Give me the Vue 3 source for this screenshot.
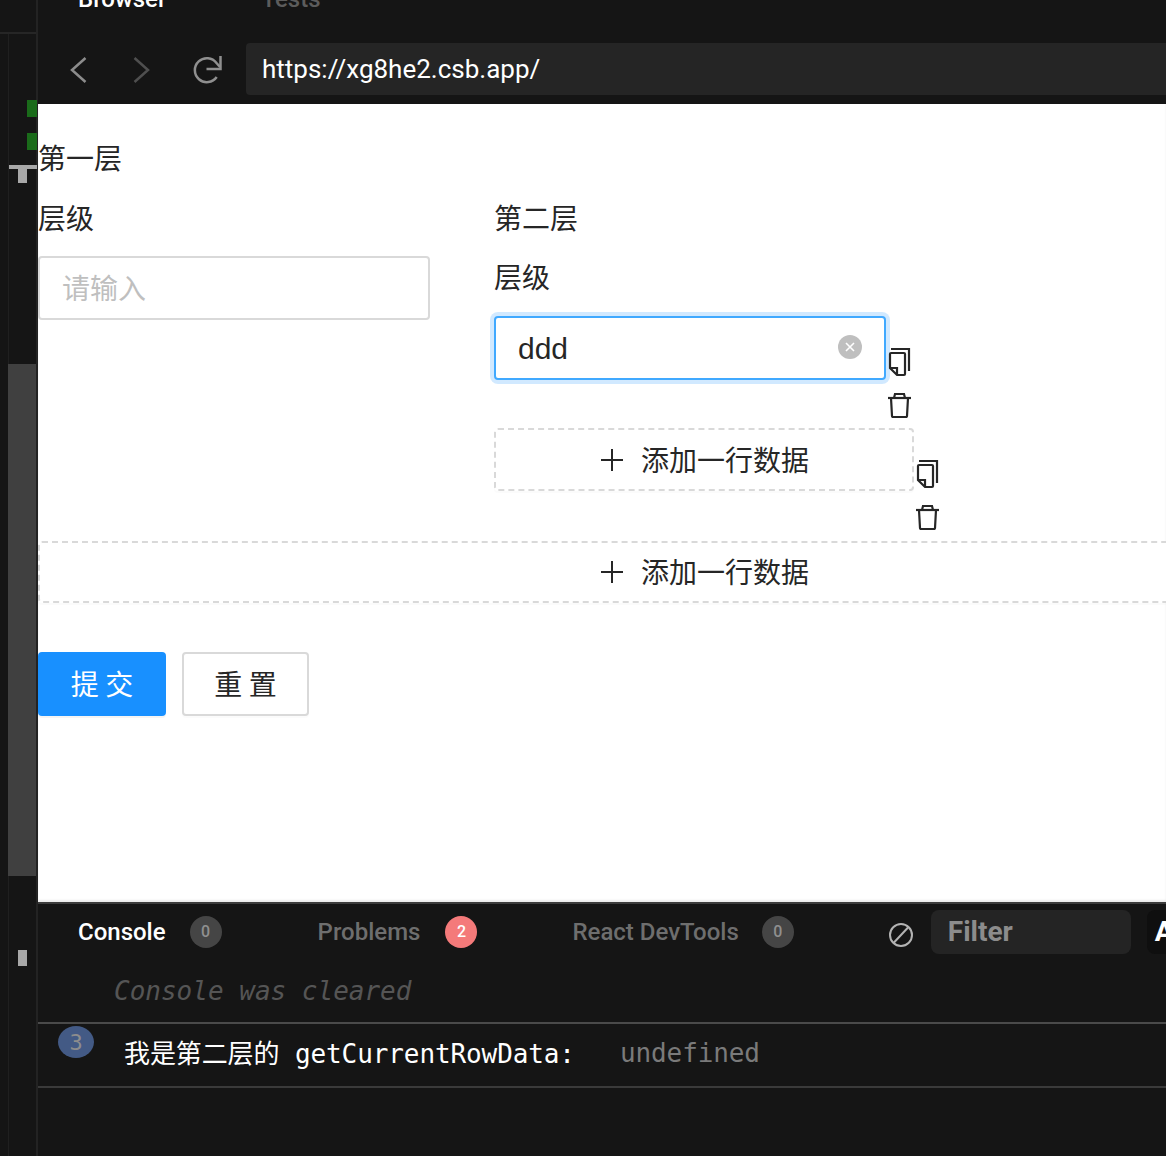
<script setup>
const tabs = [
  { name: 'Console', count: 0, active: true },
  { name: 'Problems', count: 2, alert: true },
  { name: 'React DevTools', count: 0 }
]
</script>

<template>
  <div class="root">
    <aside class="rail">
      <div class="rail-inner">
        <div class="rail-head"></div>
        <div class="rail-thumb"></div>
        <i class="mark green g1"></i>
        <i class="mark green g2"></i>
        <i class="mark t-bar"></i>
        <i class="mark t-stem"></i>
        <i class="mark dot"></i>
      </div>
    </aside>

    <main class="main">
      <header class="top">
        <nav class="top-tabs">
          <span class="top-tab on">Browser</span>
          <span class="top-tab">Tests</span>
        </nav>
        <div class="addr-row">
          <svg class="nav back" width="18" height="28" viewBox="0 0 18 28"><path d="M15.500 2 L2 14 L15.500 26" /></svg>
          <svg class="nav fwd" width="18" height="28" viewBox="0 0 18 28"><path d="M2.500 2 L16 14 L2.500 26" /></svg>
          <svg class="nav reload" width="30" height="30" viewBox="0 0 30 30"><path d="M24.700 22 A12 12 0 1 1 24.500 8 L28 12" /><path d="M28.500 1 V14 H14.500" /></svg>
          <div class="addr">https://xg8he2.csb.app/</div>
        </div>
      </header>

      <section class="preview">
        <div class="form">
          <div class="label">第一层</div>
          <div class="layers">
            <div class="col-one">
              <div class="label">层级</div>
              <input class="field" placeholder="请输入" />
            </div>
            <div class="col-two">
              <div class="label">第二层</div>
              <div class="label">层级</div>
              <div class="inner-row">
                <div class="field focused">
                  <span>ddd</span>
                  <span class="clear">
                    <svg width="10" height="10" viewBox="0 0 10 10"><path d="M1 1 L9 9 M9 1 L1 9" /></svg>
                  </span>
                </div>
                <div class="tools first-tools">
                  <svg class="ic copy" width="23" height="29" viewBox="0 0 23 29"><path d="M3 1 H21 V23" /><path d="M2 20 V6 Q2 5 3 5 H16 Q17 5 17 6 V26 Q17 27 16 27 H9 L2 20 Z" /><path d="M2 20 H9 V27" /></svg>
                  <svg class="ic trash" width="25" height="26" viewBox="0 0 25 26"><path d="M1 6 H24" /><path d="M7 6 L8 2 H17 L18 6" /><path d="M4 6 L5 24 Q5 25 6 25 H19 Q20 25 20 24 L21 6" /></svg>
                </div>
              </div>
              <button class="add narrow" type="button">
                <svg width="22" height="22" viewBox="0 0 22 22"><path d="M11 0 V22 M0 11 H22" /></svg>
                <span class="add-text">添加一行数据</span>
              </button>
            </div>
            <div class="tools outer-tools">
              <svg class="ic copy" width="23" height="29" viewBox="0 0 23 29"><path d="M3 1 H21 V23" /><path d="M2 20 V6 Q2 5 3 5 H16 Q17 5 17 6 V26 Q17 27 16 27 H9 L2 20 Z" /><path d="M2 20 H9 V27" /></svg>
              <svg class="ic trash" width="25" height="26" viewBox="0 0 25 26"><path d="M1 6 H24" /><path d="M7 6 L8 2 H17 L18 6" /><path d="M4 6 L5 24 Q5 25 6 25 H19 Q20 25 20 24 L21 6" /></svg>
            </div>
          </div>
          <button class="add wide" type="button">
            <svg width="22" height="22" viewBox="0 0 22 22"><path d="M11 0 V22 M0 11 H22" /></svg>
            <span class="add-text">添加一行数据</span>
          </button>
          <div class="actions">
            <button class="btn primary" type="button">提 交</button>
            <button class="btn" type="button">重 置</button>
          </div>
        </div>
      </section>

      <section class="console">
        <div class="con-tabs">
          <div v-for="t in tabs" :key="t.name" class="con-tab" :class="{ on: t.active }">
            <span>{{ t.name }}</span>
            <span class="count" :class="{ alert: t.alert }">{{ t.count }}</span>
          </div>
          <svg class="block" width="26" height="26" viewBox="0 0 26 26"><circle cx="13" cy="13" r="11" /><path d="M5.500 21 L20.500 5" /></svg>
          <div class="filter">Filter</div>
          <div class="all">All</div>
        </div>
        <div class="cleared">Console was cleared</div>
        <div class="log">
          <span class="repeat">3</span>
          <span class="msg">我是第二层的 getCurrentRowData:</span>
          <span class="undef">undefined</span>
        </div>
      </section>
    </main>
  </div>
</template>

<style>
html, body { margin: 0; background: #151515; }
</style>

<style scoped>
.root {
  display: flex;
  width: 1166px;
  height: 1156px;
  overflow: hidden;
  background: #151515;
  font-family: Roboto, "Noto Sans CJK SC", sans-serif;
}
.rail {
  flex: 0 0 38px;
  box-sizing: border-box;
  padding-left: 8px;
  border-right: 2px solid #232323;
}
.rail-inner {
  position: relative;
  height: 100%;
  border-left: 1px solid #202020;
}
.rail-head {
  height: 32px;
  margin-left: -9px;
  border-bottom: 2px solid #262626;
  background: #151515;
}
.rail-thumb {
  position: absolute;
  left: -1px;
  right: 0;
  top: 364px;
  height: 512px;
  background: #404040;
}
.mark { position: absolute; display: block; }
.green { left: 18px; width: 10px; height: 17px; background: #1a6b1a; }
.g1 { top: 100px; }
.g2 { top: 133px; }
.t-bar { left: 0; width: 28px; top: 165px; height: 4px; background: #a8a8a8; }
.t-stem { left: 9px; width: 9px; top: 167px; height: 16px; background: #a8a8a8; }
.dot { left: 9px; width: 9px; top: 950px; height: 16px; background: #a8a8a8; }

.main {
  flex: 1;
  min-width: 0;
  display: flex;
  flex-direction: column;
}
.top {
  flex: 0 0 104px;
  background: #151515;
}
.top-tabs {
  display: flex;
  gap: 95px;
  height: 43px;
  padding-left: 40px;
  font-size: 24px;
  font-weight: 500;
  line-height: 14px;
  color: #5c5c5c;
}
.top-tab { margin-top: -8px; }
.top-tab.on { color: #fff; }
.addr-row {
  display: flex;
  align-items: center;
  height: 52px;
  padding-left: 32px;
}
.nav { fill: none; stroke-width: 2.500px; flex: none; margin-top: 2px; }
.back { stroke: #8c8c8c; margin-right: 44px; }
.fwd { stroke: #4f4f4f; margin-right: 42px; }
.reload { stroke: #8f8f8f; margin-right: 24px; }
.addr {
  flex: 1;
  height: 52px;
  line-height: 52px;
  padding-left: 16px;
  border-radius: 4px 0 0 4px;
  background: #252525;
  color: #fff;
  font-size: 26px;
}

.preview {
  flex: 0 0 798px;
  overflow: hidden;
  background: #fff;
  box-shadow: inset 0 -2px 2px rgba(0, 0, 0, 0.08);
  color: #262626;
  font-family: "Noto Sans CJK SC", sans-serif;
  font-size: 28px;
}
.form {
  width: 1334px;
  padding-top: 34px;
}
.label {
  height: 40px;
  line-height: 38px;
  margin-bottom: 20px;
}
.layers { display: flex; height: 293px; }
.col-one { width: 392px; margin-right: 64px; }
.col-one .label { margin-bottom: 18px; }
.col-two { width: 420px; }
.col-two .label:nth-child(2) { margin-bottom: 18px; line-height: 37px; }
.inner-row { display: flex; height: 113px; }
.field {
  box-sizing: border-box;
  width: 392px;
  height: 64px;
  padding: 3px 22px 0;
  border: 2px solid #d9d9d9;
  border-radius: 4px;
  outline: none;
  background: #fff;
  color: #262626;
  font-family: "Liberation Sans", "Noto Sans CJK SC", sans-serif;
  font-size: 28px;
}
.field::placeholder { color: #bfbfbf; font-family: "Noto Sans CJK SC", sans-serif; }
.focused {
  display: flex;
  align-items: center;
  justify-content: space-between;
  padding: 2px 22px 0;
  border-color: #40a9ff;
  box-shadow: 0 0 0 4px rgba(24, 144, 255, 0.2);
  font-size: 30px;
}
.clear {
  display: flex;
  align-items: center;
  justify-content: center;
  width: 24px;
  height: 24px;
  margin-top: -4px;
  border-radius: 50%;
  background: #bfbfbf;
}
.clear path { stroke: #fff; stroke-width: 1.600px; fill: none; }
.tools {
  display: flex;
  flex-direction: column;
  flex: none;
  width: 26px;
  padding: 31px 0 0 2px;
  box-sizing: content-box;
}
.first-tools { padding-top: 32px; }
.ic { flex: none; fill: none; stroke: #262626; stroke-width: 2.200px; display: block; }
.trash { margin-top: 15px; margin-left: -1px; }
.outer-tools { padding: 262px 0 0 2px; }
.add {
  display: flex;
  align-items: center;
  justify-content: center;
  gap: 18px;
  box-sizing: border-box;
  height: 63px;
  padding: 0;
  border: 2px dashed #d9d9d9;
  border-radius: 4px;
  background: #fff;
  box-shadow: 0 2px 0 rgba(0, 0, 0, 0.015);
  color: #262626;
  font: inherit;
}
.add path { stroke: #262626; stroke-width: 2px; fill: none; }
.add-text { margin-top: -2px; }
.narrow { width: 420px; margin-top: -1px; padding-left: 2px; }
.wide { width: 1334px; height: 62px; margin-top: 50px; }
.actions {
  display: flex;
  gap: 16px;
  margin-top: 49px;
}
.btn {
  box-sizing: border-box;
  width: 127px;
  height: 64px;
  padding: 0 0 2px;
  border: 2px solid #d9d9d9;
  border-radius: 4px;
  background: #fff;
  box-shadow: 0 2px 0 rgba(0, 0, 0, 0.015);
  color: #262626;
  font: inherit;
}
.primary {
  width: 128px;
  border-color: #1890ff;
  background: #1890ff;
  box-shadow: 0 2px 0 rgba(0, 0, 0, 0.045);
  color: #fff;
}

.console {
  flex: 1;
  border-top: 2px solid #3c3c3c;
  background: #151515;
}
.con-tabs {
  display: flex;
  align-items: center;
  height: 56px;
  padding-left: 40px;
  font-size: 24px;
  font-weight: 500;
  color: #6e6e6e;
}
.con-tab {
  display: flex;
  align-items: center;
  flex: none;
  gap: 24px;
  margin-right: 96px;
  white-space: nowrap;
}
.con-tab:nth-child(2) { gap: 25px; margin-right: 95px; }
.con-tab:nth-child(3) { gap: 23px; }
.con-tab.on { color: #fff; }
.count {
  flex: none;
  width: 32px;
  height: 32px;
  line-height: 32px;
  border-radius: 50%;
  background: #454545;
  color: #8f8f8f;
  font-size: 16px;
  text-align: center;
}
.alert { background: #f47a7a; color: #fff; }
.block {
  flex: none;
  margin: 6px 17px 0 -2px;
  fill: none;
  stroke: #b3b3b3;
  stroke-width: 2px;
}
.filter {
  flex: none;
  box-sizing: border-box;
  width: 200px;
  height: 44px;
  line-height: 44px;
  padding-left: 17px;
  border-radius: 8px;
  background: #242424;
  color: #8c8c8c;
  font-size: 28px;
  font-weight: 700;
}
.all {
  flex: none;
  width: 60px;
  height: 44px;
  line-height: 44px;
  margin-left: 16px;
  padding-left: 8px;
  border-radius: 8px;
  background: #0f0f0f;
  color: #fff;
  font-size: 28px;
  font-weight: 700;
}
.cleared {
  box-sizing: border-box;
  height: 64px;
  line-height: 62px;
  padding-left: 76px;
  border-bottom: 2px solid #4a4a4a;
  color: #555;
  font-family: "DejaVu Sans Mono", monospace;
  font-size: 26px;
  font-style: italic;
}
.log {
  position: relative;
  display: flex;
  box-sizing: border-box;
  height: 64px;
  padding-left: 86px;
  border-bottom: 2px solid #3a3a3a;
  font-family: "DejaVu Sans Mono", "Noto Sans CJK SC", monospace;
  font-size: 26px;
  line-height: 60px;
}
.repeat {
  position: absolute;
  left: 20px;
  top: 2px;
  width: 36px;
  height: 32px;
  line-height: 34px;
  border-radius: 50%;
  background: #435a85;
  color: #8d8d8d;
  font-size: 22px;
  text-align: center;
}
.msg { color: #fff; letter-spacing: -0.1px; }
.undef { margin-left: 45px; color: #7a7a7a; letter-spacing: -0.1px; line-height: 58px; }
</style>
